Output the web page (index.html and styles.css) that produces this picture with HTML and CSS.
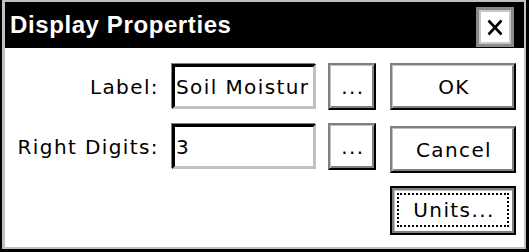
FILE: index.html
```html
<!DOCTYPE html>
<html>
<head>
<meta charset="utf-8">
<title>Display Properties</title>
<link rel="stylesheet" href="styles.css">
</head>
<body>
<div class="window">
  <div class="titlebar">
    <span class="title">Display Properties</span>
    <div class="close">
      <svg width="16" height="17" viewBox="0 0 16 17"><path d="M1.5 1.5 L14.5 15.5 M14.5 1.5 L1.5 15.5" stroke="#000" stroke-width="2.6" fill="none"/></svg>
    </div>
  </div>
  <div class="content">
    <div class="left">
      <div class="row">
        <span class="lbl">Label:</span>
        <div class="field">Soil Moistur</div>
        <div class="btn dots">...</div>
      </div>
      <div class="row">
        <span class="lbl">Right Digits:</span>
        <div class="field">3</div>
        <div class="btn dots">...</div>
      </div>
    </div>
    <div class="right">
      <div class="btn cmd">OK</div>
      <div class="btn cmd">Cancel</div>
      <div class="btn cmd units"><span class="focus">Units...</span></div>
    </div>
  </div>
</div>
</body>
</html>
```

FILE: styles.css
```css
html, body {
  margin: 0;
  padding: 0;
  background: #ffffff;
}

.window {
  box-sizing: border-box;
  width: 529px;
  height: 252px;
  background: #c0c0c0;
  border-left: 2px solid #000;
  border-right: 3px solid #000;
  border-bottom: 3px solid #000;
  padding: 2px 2px 2px 3px;
  display: flex;
  flex-direction: column;
  font-family: "DejaVu Sans", Verdana, sans-serif;
  color: #000;
}

.titlebar {
  height: 46px;
  background: #000;
  display: flex;
  align-items: flex-end;
  padding-left: 5px;
  padding-right: 10px;
  flex: none;
}

.title {
  color: #fff;
  font-family: "Liberation Sans", Arial, sans-serif;
  font-weight: bold;
  font-size: 24px;
  letter-spacing: 0.6px;
  align-self: center;
  flex: 1;
}

.close {
  box-sizing: border-box;
  width: 38px;
  height: 40px;
  margin-bottom: 1px;
  background: #fff;
  border: 3px solid #8a8a8a;
  box-shadow: inset 0 0 0 2px #c8c8c8;
  display: flex;
  align-items: center;
  justify-content: center;
}

.close svg {
  display: block;
}

.content {
  flex: 1;
  background: #fff;
  display: flex;
  align-items: flex-start;
  padding-top: 15px;
  font-size: 20px;
  letter-spacing: 1.4px;
}

.left {
  display: flex;
  flex-direction: column;
  gap: 13px;
}

.row {
  display: flex;
  align-items: center;
  height: 47px;
}

.lbl {
  width: 154px;
  text-align: right;
  white-space: nowrap;
}

.field {
  box-sizing: border-box;
  width: 144px;
  height: 45px;
  margin-left: 13px;
  border: 3px solid;
  border-color: #000 #c0c0c0 #c0c0c0 #000;
  box-shadow: -1px -1px 0 #808080;
  padding-left: 1px;
  display: flex;
  align-items: center;
  overflow: hidden;
  white-space: nowrap;
}

.btn {
  box-sizing: border-box;
  background: #fff;
  border: 2px solid;
  border-color: #808080 #000 #000 #808080;
  box-shadow: inset 1px 1px 0 #c0c0c0, inset -2px -2px 0 #808080;
  display: flex;
  align-items: center;
  justify-content: center;
  white-space: nowrap;
}

.dots {
  width: 48px;
  height: 47px;
  margin-left: 12px;
  padding-left: 2px;
}

.right {
  display: flex;
  flex-direction: column;
  gap: 16px;
  margin-left: 14px;
}

.cmd {
  width: 126px;
  height: 47px;
  padding-left: 2px;
}

.units {
  height: 49px;
  margin-top: -3px;
  border: 2px solid #000;
  box-shadow: inset 2px 2px 0 #808080, inset -2px -2px 0 #808080, inset 3px 3px 0 #c0c0c0;
  padding: 0;
  position: relative;
}

.focus {
  box-sizing: border-box;
  position: absolute;
  left: 5px;
  top: 5px;
  right: 5px;
  bottom: 6px;
  border: 2px dotted #000;
  display: flex;
  align-items: center;
  justify-content: center;
  padding-left: 2px;
}
```
